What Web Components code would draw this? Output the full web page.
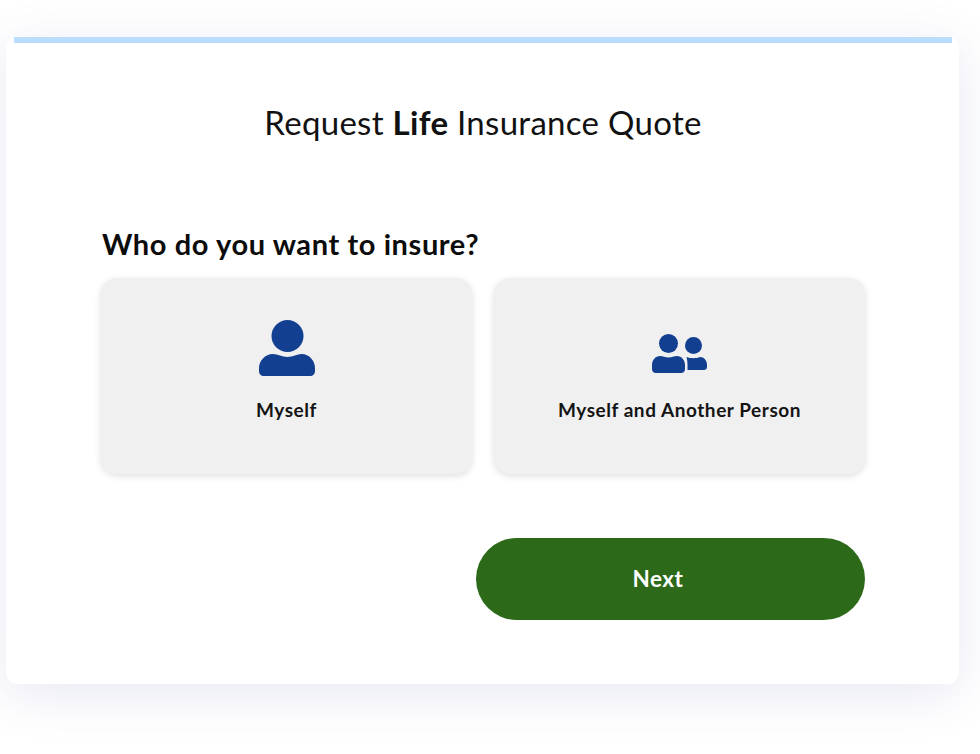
<!DOCTYPE html>
<html lang="en">
<head>
<meta charset="utf-8">
<title>Request Life Insurance Quote</title>
<style>
  html, body { margin: 0; background: #fff; }
  body { font-family: "Lato", "Open Sans", sans-serif; }
</style>
</head>
<body>
<quote-page>
  <quote-card>
    <span slot="title">Request <b>Life</b> Insurance Quote</span>
    <span slot="question">Who do you want to insure?</span>
    <option-card label="Myself" icon="single"></option-card>
    <option-card label="Myself and Another Person" icon="pair"></option-card>
    <next-button slot="action">Next</next-button>
  </quote-card>
</quote-page>

<script>
const ICONS = {
  single: `<svg width="56" height="56" viewBox="0 0 56 56" fill="#123f90">
    <circle cx="28.5" cy="16" r="16"/>
    <path d="M14 34c5 0 9 3 14.500 3s9.500-3 14-3c8 0 13.500 7 13.500 14v3c0 3-2 5-5 5H5c-3 0-5-2-5-5v-3c0-7 6-14 14-14z"/>
  </svg>`,
  pair: `<svg class="pair" width="55" height="39" viewBox="0 0 55 39" fill="#123f90">
    <circle cx="16.5" cy="9.500" r="9.500"/>
    <circle cx="41.5" cy="11.500" r="8.500"/>
    <path d="M8 22c3 0 5 1.500 8.500 1.500s5.500-1.500 8.500-1.500c4.500 0 8 4 8 9v4c0 2.500-1.500 4-4 4H4c-2.500 0-4-1.500-4-4v-4c0-5 3.500-9 8-9z"/>
    <path d="M34.500 23c2 .8 4.500 1.200 7 1.200s4.500-.4 6.500-1.200c4 0 7 3.500 7 8v2c0 2-1.500 3-3 3H35.500v-5c0-3-.3-5.500-1-8z"/>
  </svg>`
};

class QuotePage extends HTMLElement {
  constructor() {
    super();
    this.attachShadow({ mode: "open" });
    this.shadowRoot.innerHTML = `
      <style>
        :host { display: block; height: 740px; overflow: hidden; padding: 37px 21px 0 6px; box-sizing: border-box; }
      </style>
      <slot></slot>`;
  }
}

class QuoteCard extends HTMLElement {
  constructor() {
    super();
    this.attachShadow({ mode: "open" });
    this.shadowRoot.innerHTML = `
      <style>
        :host {
          display: block;
          height: 647px;
          background: #fff;
          border-radius: 12px;
          box-shadow: 0 10px 50px rgba(70, 80, 160, 0.13);
          padding: 0 7px 0 8px;
          color: #111;
        }
        .bar { height: 6px; background: #bcdcfd; }
        h1 {
          margin: 59px 0 0;
          text-align: center;
          font-size: 33px;
          line-height: 40px;
          font-weight: 400;
          letter-spacing: 0.3px;
        }
        h2 {
          margin: 85px 0 0 88px;
          font-size: 29px;
          line-height: 34px;
          font-weight: 700;
          color: #0c0c0c;
          letter-spacing: 0.6px;
        }
        .options {
          display: grid;
          grid-template-columns: 371px 371px;
          gap: 22px;
          margin: 17px 0 0 87px;
        }
        .action { display: flex; justify-content: flex-end; margin: 64px 87px 0 0; }
      </style>
      <div class="bar"></div>
      <h1><slot name="title"></slot></h1>
      <h2><slot name="question"></slot></h2>
      <div class="options"><slot></slot></div>
      <div class="action"><slot name="action"></slot></div>`;
  }
}

class OptionCard extends HTMLElement {
  constructor() {
    super();
    this.attachShadow({ mode: "open" });
    this.shadowRoot.innerHTML = `
      <style>
        :host {
          display: flex;
          flex-direction: column;
          align-items: center;
          height: 196px;
          box-sizing: border-box;
          background: #f0f0f0;
          border-radius: 16px;
          box-shadow: 0 2px 7px rgba(0, 0, 0, 0.13);
          cursor: pointer;
        }
        .icon { margin-top: 42px; height: 56px; display: flex; align-items: flex-end; }
        .pair { margin-bottom: 3px; }
        .label { margin-top: 23px; font-size: 19px; line-height: 22px; font-weight: 700; color: #141414; letter-spacing: 0.55px; }
      </style>
      <div class="icon">${ICONS[this.getAttribute("icon")]}</div>
      <div class="label">${this.getAttribute("label")}</div>`;
  }
}

class NextButton extends HTMLElement {
  constructor() {
    super();
    this.attachShadow({ mode: "open" });
    this.shadowRoot.innerHTML = `
      <style>
        :host {
          display: flex;
          align-items: center;
          justify-content: center;
          width: 389px;
          height: 82px;
          box-sizing: border-box;
          padding: 0 25px 2px 0;
          background: #2c6a19;
          border-radius: 41px;
          color: #fff;
          font-size: 22.5px;
          font-weight: 700;
          letter-spacing: 0.5px;
          cursor: pointer;
        }
      </style>
      <slot></slot>`;
  }
}

customElements.define("quote-page", QuotePage);
customElements.define("quote-card", QuoteCard);
customElements.define("option-card", OptionCard);
customElements.define("next-button", NextButton);
</script>
</body>
</html>
